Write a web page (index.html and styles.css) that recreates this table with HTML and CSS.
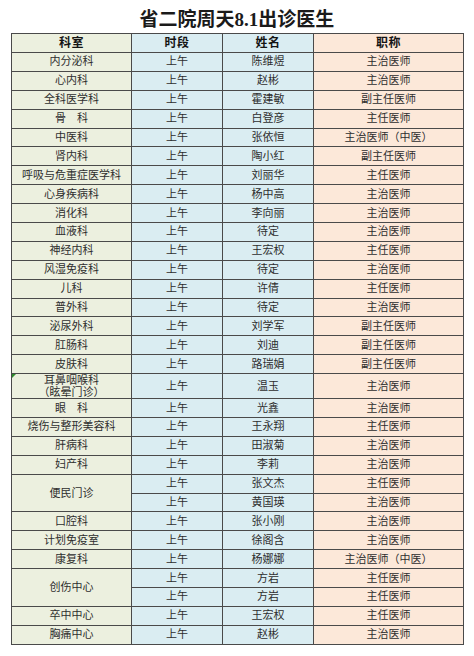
FILE: index.html
```html
<!DOCTYPE html>
<html lang="zh-CN">
<head>
<meta charset="utf-8">
<title>省二院周天8.1出诊医生</title>
<link rel="stylesheet" href="styles.css">
</head>
<body>
<div class="page">
  <h1 class="title">省二院周天8.1出诊医生</h1>
  <table class="sheet">
    <colgroup>
      <col class="c-dept"><col class="c-time"><col class="c-name"><col class="c-rank">
    </colgroup>
    <thead>
      <tr class="head"><th class="dept">科室</th><th class="time">时段</th><th class="name">姓名</th><th class="rank">职称</th></tr>
    </thead>
    <tbody>
      <tr><td class="dept">内分泌科</td><td class="time">上午</td><td class="name">陈维煜</td><td class="rank">主治医师</td></tr>
      <tr><td class="dept">心内科</td><td class="time">上午</td><td class="name">赵彬</td><td class="rank">主治医师</td></tr>
      <tr><td class="dept">全科医学科</td><td class="time">上午</td><td class="name">霍建敏</td><td class="rank">副主任医师</td></tr>
      <tr><td class="dept">骨　科</td><td class="time">上午</td><td class="name">白登彦</td><td class="rank">主任医师</td></tr>
      <tr><td class="dept">中医科</td><td class="time">上午</td><td class="name">张依恒</td><td class="rank">主治医师（中医）</td></tr>
      <tr><td class="dept">肾内科</td><td class="time">上午</td><td class="name">陶小红</td><td class="rank">副主任医师</td></tr>
      <tr><td class="dept">呼吸与危重症医学科</td><td class="time">上午</td><td class="name">刘丽华</td><td class="rank">主任医师</td></tr>
      <tr><td class="dept">心身疾病科</td><td class="time">上午</td><td class="name">杨中高</td><td class="rank">主治医师</td></tr>
      <tr><td class="dept">消化科</td><td class="time">上午</td><td class="name">李向丽</td><td class="rank">主治医师</td></tr>
      <tr><td class="dept">血液科</td><td class="time">上午</td><td class="name">待定</td><td class="rank">主治医师</td></tr>
      <tr><td class="dept">神经内科</td><td class="time">上午</td><td class="name">王宏权</td><td class="rank">主任医师</td></tr>
      <tr><td class="dept">风湿免疫科</td><td class="time">上午</td><td class="name">待定</td><td class="rank">主治医师</td></tr>
      <tr><td class="dept">儿科</td><td class="time">上午</td><td class="name">许倩</td><td class="rank">主任医师</td></tr>
      <tr><td class="dept">普外科</td><td class="time">上午</td><td class="name">待定</td><td class="rank">主治医师</td></tr>
      <tr><td class="dept">泌尿外科</td><td class="time">上午</td><td class="name">刘学军</td><td class="rank">副主任医师</td></tr>
      <tr><td class="dept">肛肠科</td><td class="time">上午</td><td class="name">刘迪</td><td class="rank">副主任医师</td></tr>
      <tr><td class="dept">皮肤科</td><td class="time">上午</td><td class="name">路瑞娟</td><td class="rank">副主任医师</td></tr>
      <tr class="tall"><td class="dept flagged"><span class="two-line">耳鼻咽喉科<br>（眩晕门诊）</span></td><td class="time">上午</td><td class="name">温玉</td><td class="rank">主治医师</td></tr>
      <tr><td class="dept">眼　科</td><td class="time">上午</td><td class="name">光鑫</td><td class="rank">主治医师</td></tr>
      <tr><td class="dept">烧伤与整形美容科</td><td class="time">上午</td><td class="name">王永翔</td><td class="rank">主任医师</td></tr>
      <tr><td class="dept">肝病科</td><td class="time">上午</td><td class="name">田淑菊</td><td class="rank">主治医师</td></tr>
      <tr><td class="dept">妇产科</td><td class="time">上午</td><td class="name">李莉</td><td class="rank">主治医师</td></tr>
      <tr><td class="dept" rowspan="2">便民门诊</td><td class="time">上午</td><td class="name">张文杰</td><td class="rank">主任医师</td></tr>
      <tr><td class="time">上午</td><td class="name">黄国瑛</td><td class="rank">主治医师</td></tr>
      <tr><td class="dept">口腔科</td><td class="time">上午</td><td class="name">张小刚</td><td class="rank">主治医师</td></tr>
      <tr><td class="dept">计划免疫室</td><td class="time">上午</td><td class="name">徐阁含</td><td class="rank">主治医师</td></tr>
      <tr><td class="dept">康复科</td><td class="time">上午</td><td class="name">杨娜娜</td><td class="rank">主治医师（中医）</td></tr>
      <tr><td class="dept" rowspan="2">创伤中心</td><td class="time">上午</td><td class="name">方岩</td><td class="rank">主任医师</td></tr>
      <tr><td class="time">上午</td><td class="name">方岩</td><td class="rank">主任医师</td></tr>
      <tr><td class="dept">卒中中心</td><td class="time">上午</td><td class="name">王宏权</td><td class="rank">主任医师</td></tr>
      <tr><td class="dept">胸痛中心</td><td class="time">上午</td><td class="name">赵彬</td><td class="rank">主治医师</td></tr>
    </tbody>
  </table>
</div>
</body>
</html>
```

FILE: styles.css
```css
html, body {
  margin: 0;
  padding: 0;
  background: #ffffff;
}

.page {
  width: 474px;
  padding: 0 11px;
  box-sizing: border-box;
  font-family: "Liberation Sans", "Noto Sans CJK SC", sans-serif;
  color: #2e2e2e;
}

.title {
  margin: 0 0 2px 0;
  padding-top: 9px;
  height: 22px;
  line-height: 22px;
  font-size: 19px;
  font-weight: 700;
  text-align: center;
  color: #1a1a1a;
  font-family: "Liberation Serif", "Noto Sans CJK SC", serif;
}

.sheet {
  width: 452px;
  border-collapse: collapse;
  table-layout: fixed;
  border: 1px solid #3c3c3c;
}

.c-dept { width: 120px; }
.c-time { width: 91px; }
.c-name { width: 91px; }
.c-rank { width: 150px; }

.sheet th,
.sheet td {
  border: 1px solid #4a4a4a;
  padding: 0;
  text-align: center;
  vertical-align: middle;
  font-size: 11px;
  line-height: 13px;
  white-space: nowrap;
  overflow: hidden;
}

.sheet tr {
  height: 18.9px;
}

.sheet tr.head {
  height: 19px;
}

.sheet th {
  font-size: 12px;
  font-weight: 700;
  letter-spacing: 0.5px;
  color: #141414;
}

.sheet tr.tall {
  height: 25px;
}

.dept { background: #ecf0df; }
.time { background: #daedf2; }
.name { background: #daedf2; }
.rank { background: #fce8d9; }

.two-line {
  display: block;
  line-height: 11.5px;
  padding-top: 1px;
}

.flagged {
  position: relative;
}

.flagged::before {
  content: "";
  position: absolute;
  left: 0;
  top: 0;
  width: 0;
  height: 0;
  border-top: 4px solid #2e8b2e;
  border-right: 4px solid transparent;
}
```
